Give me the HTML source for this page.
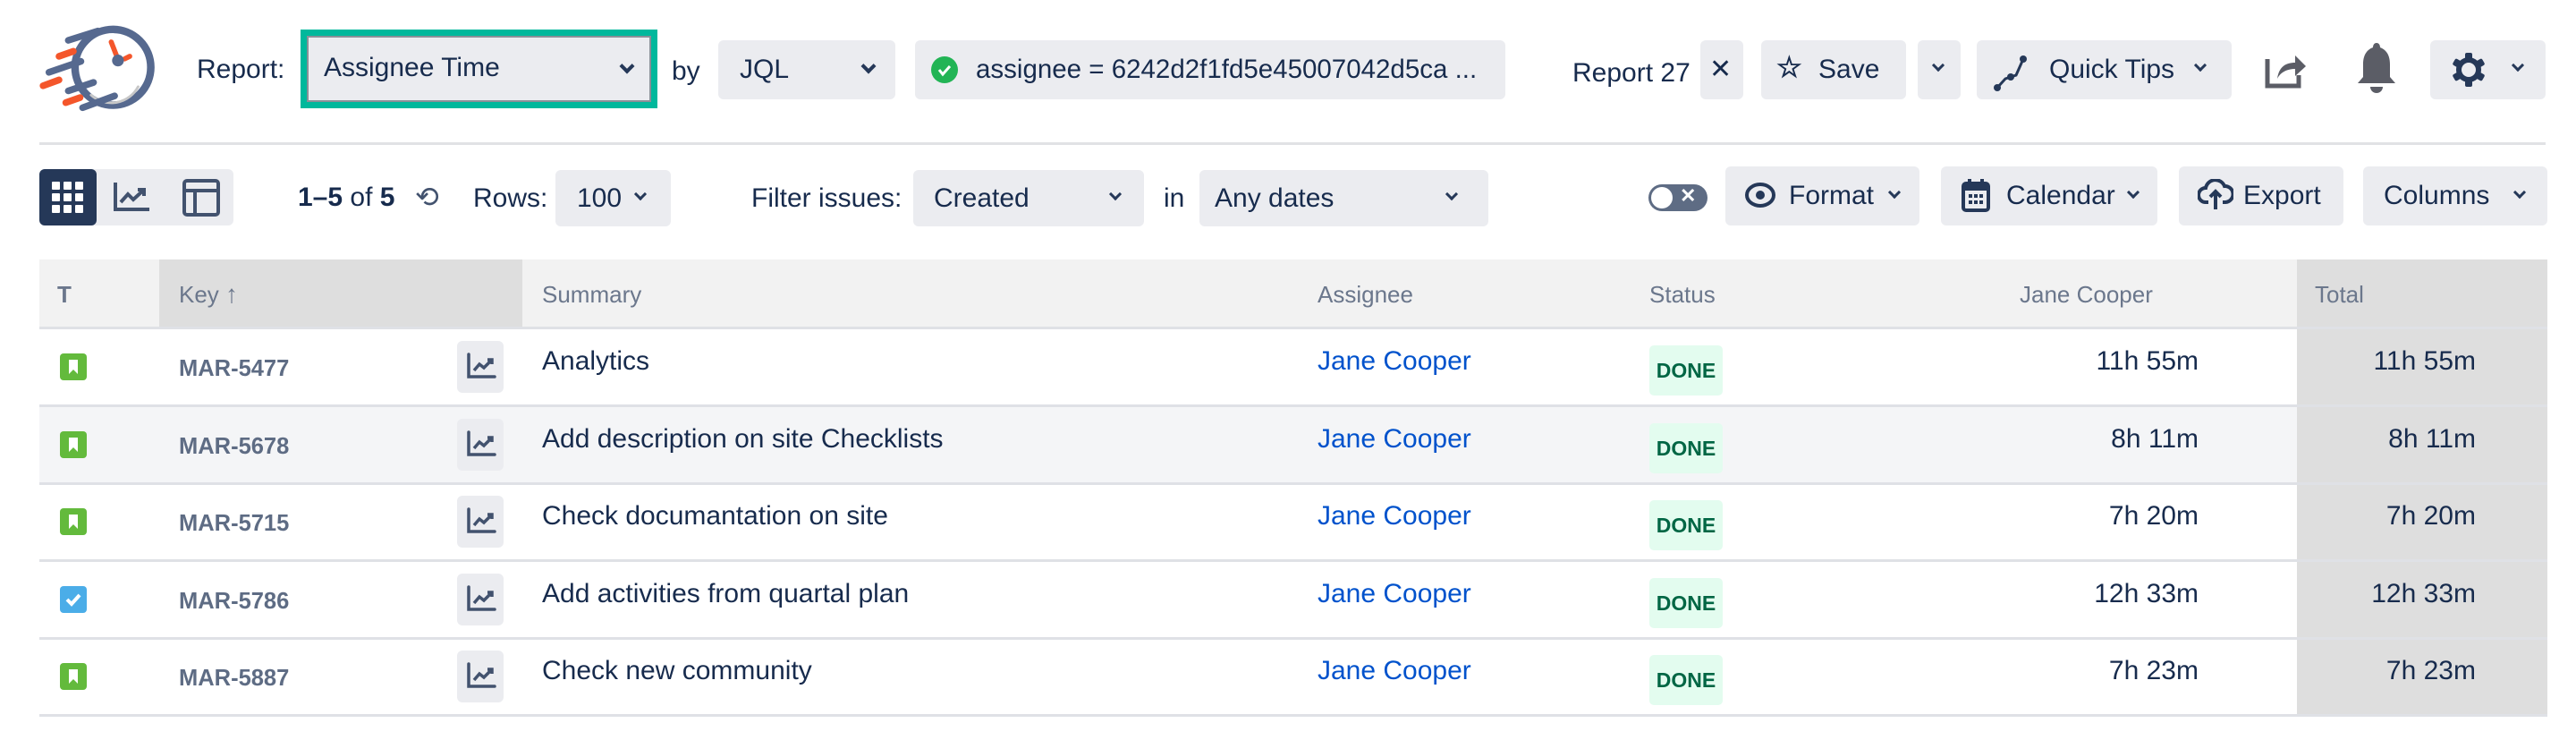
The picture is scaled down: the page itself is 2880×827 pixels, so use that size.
<!DOCTYPE html>
<html><head><meta charset="utf-8"><style>
*{box-sizing:border-box;margin:0;padding:0}
body{width:2880px;height:827px;background:#fff;font-family:"Liberation Sans",sans-serif;color:#172b4d;position:relative;overflow:hidden}
.a{position:absolute}
.t{position:absolute;font-size:30px;line-height:34px;white-space:nowrap}
.btn{position:absolute;background:#ebecf0;border-radius:6px}
.chev{position:absolute;width:12px;height:12px;border-right:4px solid #253858;border-bottom:4px solid #253858;transform:rotate(45deg)}
.hd{position:absolute;font-size:26px;color:#6b778c;line-height:30px;white-space:nowrap}
.key{position:absolute;font-size:25.5px;font-weight:bold;color:#5e6c84;white-space:nowrap;line-height:30px}
.cb{position:absolute;width:52px;height:58px;background:#ebecf0;border-radius:6px}
.done{position:absolute;width:82px;height:56px;background:#e3fcef;border-radius:5px;color:#006644;font-weight:bold;font-size:23px;line-height:56px;text-align:center}
.val{position:absolute;font-size:30px;line-height:34px;text-align:right;width:300px}
.lnk{color:#0052cc}
</style></head><body>

<!-- logo -->
<svg class="a" style="left:34px;top:14px" width="160" height="128" viewBox="0 0 170 130">
<g stroke-linecap="round" fill="none">
<circle cx="98" cy="62" r="45" stroke="#56698f" stroke-width="9"/>
<path d="M72 95 A36 36 0 0 0 128 85" stroke="#c7c7c7" stroke-width="3"/>
<line x1="45" y1="30" x2="80" y2="19" stroke="#56698f" stroke-width="8"/>
<line x1="22" y1="68" x2="60" y2="55" stroke="#56698f" stroke-width="8"/>
<line x1="45" y1="90" x2="75" y2="80" stroke="#56698f" stroke-width="8"/>
<line x1="62" y1="110" x2="100" y2="96" stroke="#56698f" stroke-width="8"/>
<line x1="34" y1="49" x2="51" y2="43" stroke="#f4562b" stroke-width="8"/>
<line x1="15" y1="84" x2="34" y2="77" stroke="#f4562b" stroke-width="8"/>
<line x1="42" y1="104" x2="59" y2="98" stroke="#f4562b" stroke-width="8"/>
<line x1="96" y1="32" x2="103" y2="50" stroke="#f4562b" stroke-width="6"/>
<line x1="112" y1="52" x2="118" y2="49" stroke="#f4562b" stroke-width="6"/>
</g>
<circle cx="104" cy="54" r="7" fill="#56698f"/>
</svg>

<!-- top bar -->
<div class="t" style="left:220px;top:61px">Report:</div>
<div class="a" style="left:336px;top:33px;width:399px;height:88px;background:#00b89c;padding:7px">
 <div style="width:100%;height:100%;background:#ebecf0;border:2px solid #8a9098"></div></div>
<div class="t" style="left:362px;top:59px">Assignee Time</div>
<div class="chev" style="left:695px;top:68px"></div>
<div class="t" style="left:751px;top:63px">by</div>
<div class="btn" style="left:803px;top:45px;width:198px;height:66px"></div>
<div class="t" style="left:827px;top:61px">JQL</div>
<div class="chev" style="left:965px;top:68px"></div>
<div class="btn" style="left:1023px;top:45px;width:660px;height:66px"></div>
<svg class="a" style="left:1041px;top:63px" width="30" height="30"><circle cx="15" cy="15" r="15" fill="#22b455"/><path d="M9 15l4 5 8-9" stroke="#fff" stroke-width="3" fill="none"/></svg>
<div class="t" style="left:1091px;top:61px;font-size:29.5px">assignee = 6242d2f1fd5e45007042d5ca ...</div>
<div class="t" style="left:1758px;top:65px">Report 27</div>
<div class="btn" style="left:1901px;top:45px;width:48px;height:66px"></div>
<div class="t" style="left:1911px;top:61px;font-size:30px">✕</div>
<div class="btn" style="left:1969px;top:45px;width:162px;height:66px"></div>
<div class="t" style="left:1986px;top:58px;font-size:32px;font-weight:bold">☆</div>
<div class="t" style="left:2033px;top:61px">Save</div>
<div class="btn" style="left:2144px;top:45px;width:48px;height:66px"></div>
<div class="chev" style="left:2162px;top:68px;width:10px;height:10px;border-width:3px"></div>
<div class="btn" style="left:2210px;top:45px;width:285px;height:66px"></div>
<svg class="a" style="left:2228px;top:60px" width="40" height="44"><path d="M5 38 L14 28 L26 24 L34 6" stroke="#253858" stroke-width="3" fill="none"/><circle cx="5" cy="38" r="4" fill="#253858"/><circle cx="20" cy="26" r="4" fill="#253858"/><circle cx="34" cy="6" r="4" fill="#253858"/></svg>
<div class="t" style="left:2291px;top:61px">Quick Tips</div>
<div class="chev" style="left:2455px;top:68px;width:10px;height:10px;border-width:3px"></div>
<svg class="a" style="left:2530px;top:52px" width="50" height="50" viewBox="0 0 50 50"><path d="M5 14 V44 H40 V32" stroke="#5b5d66" stroke-width="5" fill="none"/><path d="M16 36 C18 22 26 18 36 18 V10 L48 22 L36 33 V25 C28 25 20 28 16 36Z" fill="#5b5d66"/></svg>
<svg class="a" style="left:2632px;top:46px" width="50" height="62" viewBox="0 0 50 62"><path d="M25 2 C28 2 29 5 29 7 C37 10 40 17 40 26 V40 L46 47 H4 L10 40 V26 C10 17 13 10 21 7 C21 5 22 2 25 2Z" fill="#5b5d66"/><path d="M18 51 A7 7 0 0 0 32 51Z" fill="#5b5d66"/></svg>
<div class="btn" style="left:2717px;top:45px;width:129px;height:66px"></div>
<svg class="a" style="left:2741px;top:59px" width="38" height="38" viewBox="0 0 38 38"><g fill="#253858"><circle cx="19" cy="19" r="14"/><rect x="15" y="0" width="8" height="38" rx="2"/><rect x="15" y="0" width="8" height="38" rx="2" transform="rotate(60 19 19)"/><rect x="15" y="0" width="8" height="38" rx="2" transform="rotate(120 19 19)"/></g><circle cx="19" cy="19" r="8" fill="#ebecf0"/></svg>
<div class="chev" style="left:2810px;top:68px;width:10px;height:10px;border-width:3px"></div>

<div class="a" style="left:44px;top:159px;width:2802px;height:3px;background:#e1e2e5"></div>

<!-- second bar -->
<div class="btn" style="left:44px;top:189px;width:217px;height:63px"></div>
<div class="a" style="left:44px;top:189px;width:64px;height:63px;background:#253858;border-radius:6px"></div>
<svg class="a" style="left:58px;top:203px" width="36" height="36"><g fill="#fff"><rect x="0" y="0" width="9" height="9" rx="1"/><rect x="13" y="0" width="9" height="9" rx="1"/><rect x="26" y="0" width="9" height="9" rx="1"/><rect x="0" y="13" width="9" height="9" rx="1"/><rect x="13" y="13" width="9" height="9" rx="1"/><rect x="26" y="13" width="9" height="9" rx="1"/><rect x="0" y="26" width="9" height="9" rx="1"/><rect x="13" y="26" width="9" height="9" rx="1"/><rect x="26" y="26" width="9" height="9" rx="1"/></g></svg>
<svg class="a" style="left:126px;top:202px" width="44" height="36"><path d="M3 2 V32 H41" stroke="#42526e" stroke-width="4" fill="none"/><path d="M9 24 L17 15 L23 21 L35 10 M28 10 H35 V17" stroke="#42526e" stroke-width="4" fill="none"/></svg>
<svg class="a" style="left:204px;top:200px" width="42" height="42"><rect x="2" y="2" width="38" height="38" rx="3" stroke="#42526e" stroke-width="4" fill="none"/><path d="M2 13 H40 M14 13 V40" stroke="#42526e" stroke-width="4"/></svg>
<div class="t" style="left:333px;top:204px"><b>1–5</b> of <b>5</b></div>
<div class="t" style="left:464px;top:203px;font-size:32px;color:#42526e">⟲</div>
<div class="t" style="left:529px;top:205px">Rows:</div>
<div class="btn" style="left:621px;top:190px;width:129px;height:63px"></div>
<div class="t" style="left:645px;top:205px">100</div>
<div class="chev" style="left:711px;top:212px;width:10px;height:10px;border-width:3px"></div>
<div class="t" style="left:840px;top:205px">Filter issues:</div>
<div class="btn" style="left:1021px;top:190px;width:258px;height:63px"></div>
<div class="t" style="left:1044px;top:205px">Created</div>
<div class="chev" style="left:1242px;top:212px;width:10px;height:10px;border-width:3px"></div>
<div class="t" style="left:1301px;top:205px">in</div>
<div class="btn" style="left:1341px;top:190px;width:323px;height:63px"></div>
<div class="t" style="left:1358px;top:205px">Any dates</div>
<div class="chev" style="left:1618px;top:212px;width:10px;height:10px;border-width:3px"></div>
<div class="a" style="left:1843px;top:206px;width:66px;height:30px;border-radius:15px;background:#5e6c84"></div>
<div class="a" style="left:1846px;top:209px;width:24px;height:24px;border-radius:12px;background:#fff"></div>
<div class="t" style="left:1878px;top:202px;font-size:22px;color:#fff;font-weight:bold">✕</div>
<div class="btn" style="left:1929px;top:186px;width:217px;height:66px"></div>
<svg class="a" style="left:1950px;top:203px" width="36" height="30"><ellipse cx="18" cy="15" rx="15" ry="12" stroke="#253858" stroke-width="4" fill="none"/><circle cx="18" cy="15" r="5" fill="#253858"/></svg>
<div class="t" style="left:2000px;top:202px">Format</div>
<div class="chev" style="left:2113px;top:210px;width:10px;height:10px;border-width:3px"></div>
<div class="btn" style="left:2170px;top:186px;width:242px;height:66px"></div>
<svg class="a" style="left:2193px;top:199px" width="32" height="38"><rect x="2" y="6" width="28" height="30" rx="3" stroke="#253858" stroke-width="4" fill="none"/><rect x="2" y="6" width="28" height="8" fill="#253858"/><path d="M9 1v8M23 1v8" stroke="#253858" stroke-width="4"/><g fill="#253858"><rect x="8" y="18" width="4" height="4"/><rect x="14" y="18" width="4" height="4"/><rect x="20" y="18" width="4" height="4"/><rect x="8" y="25" width="4" height="4"/><rect x="14" y="25" width="4" height="4"/><rect x="20" y="25" width="4" height="4"/></g></svg>
<div class="t" style="left:2243px;top:202px">Calendar</div>
<div class="chev" style="left:2380px;top:210px;width:10px;height:10px;border-width:3px"></div>
<div class="btn" style="left:2436px;top:186px;width:184px;height:66px"></div>
<svg class="a" style="left:2457px;top:200px" width="40" height="36"><path d="M12 26 H9 A8 8 0 0 1 9 10 A11 11 0 0 1 30 8 A8 8 0 0 1 31 26 H28" stroke="#253858" stroke-width="4" fill="none"/><path d="M20 14 V34 M14 20 L20 14 L26 20" stroke="#253858" stroke-width="4" fill="none"/></svg>
<div class="t" style="left:2508px;top:202px">Export</div>
<div class="btn" style="left:2642px;top:186px;width:206px;height:66px"></div>
<div class="t" style="left:2665px;top:202px">Columns</div>
<div class="chev" style="left:2812px;top:210px;width:10px;height:10px;border-width:3px"></div>

<!-- table -->
<div class="a" style="left:44px;top:290px;width:2804px;height:77px;background:#f2f2f2"></div>
<div class="a" style="left:178px;top:290px;width:406px;height:77px;background:#dedede"></div>
<div class="a" style="left:44px;top:454px;width:2804px;height:86px;background:#f4f5f7"></div>
<div class="a" style="left:2568px;top:290px;width:280px;height:509px;background:#dedede"></div>
<div class="a" style="left:44px;top:365px;width:2804px;height:3px;background:#dfe1e6"></div>
<div class="a" style="left:44px;top:452px;width:2804px;height:3px;background:#dfe1e6"></div>
<div class="a" style="left:44px;top:539px;width:2804px;height:3px;background:#dfe1e6"></div>
<div class="a" style="left:44px;top:625px;width:2804px;height:3px;background:#dfe1e6"></div>
<div class="a" style="left:44px;top:712px;width:2804px;height:3px;background:#dfe1e6"></div>
<div class="a" style="left:44px;top:798px;width:2804px;height:3px;background:#dfe1e6"></div>

<div class="hd" style="left:64px;top:314px;font-weight:bold">T</div>
<div class="hd" style="left:200px;top:314px">Key <span style="font-size:28px">↑</span></div>
<div class="hd" style="left:606px;top:314px">Summary</div>
<div class="hd" style="left:1473px;top:314px">Assignee</div>
<div class="hd" style="left:1844px;top:314px">Status</div>
<div class="hd" style="left:2258px;top:314px">Jane Cooper</div>
<div class="hd" style="left:2588px;top:314px">Total</div>

<div id="rows"></div>
<script>
var R=[["MAR-5477","Analytics","11h 55m",0],["MAR-5678","Add description on site Checklists","8h 11m",0],["MAR-5715","Check documantation on site","7h 20m",0],["MAR-5786","Add activities from quartal plan","12h 33m",1],["MAR-5887","Check new community","7h 23m",0]];
var h="";
R.forEach(function(r,i){var c=410+i*86.5;
var ic=r[3]?'<svg class="a" style="left:67px;top:'+(c-15)+'px" width="30" height="30"><rect width="30" height="30" rx="4" fill="#4bade8"/><path d="M8 15l5 5 9-10" stroke="#fff" stroke-width="4" fill="none"/></svg>':'<svg class="a" style="left:67px;top:'+(c-15)+'px" width="30" height="30"><rect width="30" height="30" rx="4" fill="#63ba3c"/><path d="M10 7h10v16l-5-5-5 5z" fill="#fff"/></svg>';
h+=ic+'<div class="key" style="left:200px;top:'+(c-13)+'px">'+r[0]+'</div>';
h+='<div class="cb" style="left:511px;top:'+(c-29)+'px"></div><svg class="a" style="left:521px;top:'+(c-16)+'px" width="34" height="30"><path d="M3 2V27H32" stroke="#42526e" stroke-width="3.5" fill="none" stroke-linecap="round"/><path d="M9 20L15 13L20 17L29 8M24 8H29V13" stroke="#42526e" stroke-width="3.5" fill="none"/></svg>';
h+='<div class="t" style="left:606px;top:'+(c-23)+'px">'+r[1]+'</div>';
h+='<div class="t lnk" style="left:1473px;top:'+(c-23)+'px">Jane Cooper</div>';
h+='<div class="done" style="left:1844px;top:'+(c-24)+'px">DONE</div>';
h+='<div class="val" style="left:2158px;top:'+(c-23)+'px">'+r[2]+'</div>';
h+='<div class="val" style="left:2468px;top:'+(c-23)+'px">'+r[2]+'</div>';
});
document.getElementById("rows").innerHTML=h;
</script>
</body></html>
